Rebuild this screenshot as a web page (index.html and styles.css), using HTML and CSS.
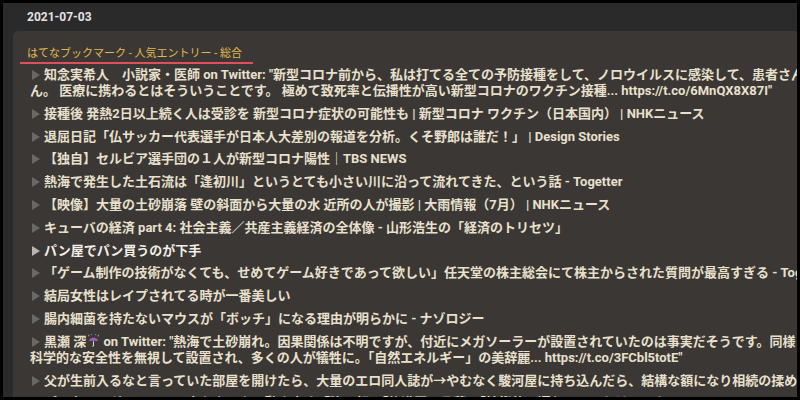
FILE: index.html
```html
<!DOCTYPE html>
<html lang="ja">
<head>
    <meta charset="UTF-8">
    <title>はてなブックマーク - 人気エントリー - 総合</title>
    <link rel="stylesheet" href="styles.css">
</head>
<body>
    <div class="frame">
        <div class="date">2021-07-03</div>

        <div class="panel">
            <h2 class="feed-title">はてなブックマーク - 人気エントリー - 総合</h2>
            <ul class="entries">
                <li>知念実希人　小説家・医師 on Twitter: "新型コロナ前から、私は打てる全ての予防接種をして、ノロウイルスに感染して、患者さん<br>ん。 医療に携わるとはそういうことです。 極めて致死率と伝播性が高い新型コロナのワクチン接種... https://t.co/6MnQX8X87I"</li>
                <li>接種後 発熱2日以上続く人は受診を 新型コロナ症状の可能性も | 新型コロナ ワクチン（日本国内） | NHKニュース</li>
                <li>退屈日記「仏サッカー代表選手が日本人大差別の報道を分析。くそ野郎は誰だ！」 | Design Stories</li>
                <li>【独自】セルビア選手団の１人が新型コロナ陽性｜TBS NEWS</li>
                <li>熱海で発生した土石流は「逢初川」というとても小さい川に沿って流れてきた、という話 - Togetter</li>
                <li>【映像】大量の土砂崩落 壁の斜面から大量の水 近所の人が撮影 | 大雨情報（7月） | NHKニュース</li>
                <li>キューバの経済 part 4: 社会主義／共産主義経済の全体像 - 山形浩生の「経済のトリセツ」</li>
                <li class="active">パン屋でパン買うのが下手</li>
                <li>「ゲーム制作の技術がなくても、せめてゲーム好きであって欲しい」任天堂の株主総会にて株主からされた質問が最高すぎる - Togetter</li>
                <li>結局女性はレイプされてる時が一番美しい</li>
                <li>腸内細菌を持たないマウスが「ボッチ」になる理由が明らかに - ナゾロジー</li>
                <li>黒瀬 深<svg class="umbrella" viewBox="0 0 12 12" width="13" height="13"><path d="M0.8 6.6 Q6 -0.2 11.2 6.6 Q9.6 5.4 8.4 6.6 Q7.2 5.4 6 6.6 Q4.8 5.4 3.6 6.6 Q2.4 5.4 0.8 6.6Z" fill="#a45ccb"/><path d="M6 6.6 V10.4 Q6 11.6 4.8 11.3" stroke="#d4cfe0" stroke-width="1" fill="none"/><path d="M1.6 0.8v1.4M10.4 0.8v1.4M4 0.2v0.8M8 0.2v0.8" stroke="#8cb8e8" stroke-width="0.9"/></svg> on Twitter: "熱海で土砂崩れ。因果関係は不明ですが、付近にメガソーラーが設置されていたのは事実だそうです。同様<br>科学的な安全性を無視して設置され、多くの人が犠牲に。「自然エネルギー」の美辞麗... https://t.co/3FCbl5totE"</li>
                <li>父が生前入るなと言っていた部屋を開けたら、大量のエロ同人誌が→やむなく駿河屋に持ち込んだら、結構な額になり相続の揉め事が片付いた話 - Togetter</li>
                <li>デジタル・ガバメント日本もようやく動き出す「強い顔」「後進国の言葉」「技術的に遅れているわけではない」</li>
            </ul>
        </div>
    </div>
</body>
</html>
```

FILE: styles.css
```css
body {
    margin: 0;
    background-color: #000;
    font-family: Roboto, "Noto Sans CJK JP", sans-serif;
}
.frame {
    margin: 3px;
    height: 394px;
    overflow: hidden;
    background-color: #2a2a2a;
}
.date {
    height: 28px;
    line-height: 28px;
    padding-left: 24px;
    font-size: 12px;
    font-weight: bold;
    color: #e2e2e2;
}
.panel {
    margin-left: 10px;
    width: 1100px;
    height: 400px;
    padding: 11px 0 0 17px;
    background-color: #3a3734;
    border-top-left-radius: 5px;
}
.feed-title {
    display: inline-block;
    margin: 0 0 3px -10px;
    padding: 0 11px 0 7px;
    line-height: 16px;
    font-size: 11px;
    font-weight: normal;
    color: #e2b950;
    border-bottom: 2px solid #e0505a;
}
.entries {
    list-style: none;
    margin: 0;
    padding: 0;
}
.entries li {
    margin-bottom: 6.8px;
    line-height: 16px;
    font-size: 13px;
    font-weight: bold;
    color: #e8e0cd;
    white-space: nowrap;
}
.entries li::before {
    content: "";
    display: inline-block;
    margin: 0 4px 0 2px;
    border-left: 8px solid #6a6866;
    border-top: 5px solid transparent;
    border-bottom: 5px solid transparent;
    vertical-align: -1px;
}
.entries li.active {
    color: #f4efe6;
}
.entries li.active::before {
    border-left-color: #b8b6b2;
}
.umbrella {
    margin-left: 1px;
    vertical-align: -1px;
}
```
